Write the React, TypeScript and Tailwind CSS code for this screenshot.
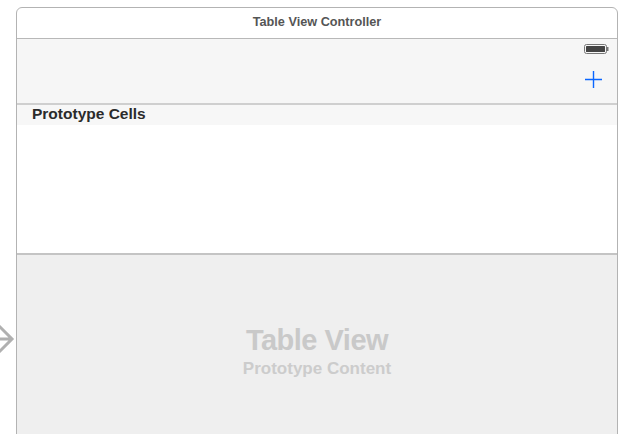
export default function App() {
  return (
    <main className="h-[434px] w-[633px] overflow-hidden bg-white pl-4 pr-[15px] pt-[7px] font-['Liberation_Sans',sans-serif]">
      <div className="relative flex h-[440px] flex-col rounded-t-[6px] border border-[#b3b3b3] bg-white">
        {/* Title bar */}
        <div className="flex h-[31px] shrink-0 items-center justify-center border-b border-[#b8b8b8] text-[12.7px] font-bold text-[#555555]">
          Table View Controller
        </div>

        {/* Navigation bar */}
        <div className="flex h-[66px] shrink-0 flex-col items-end border-b-2 border-[#cfcfcf] bg-[#f6f6f6] pr-[8px] pt-[5px]">
          <svg width="25" height="10" viewBox="0 0 25 10">
            <rect x="0.5" y="0.5" width="22" height="9" rx="2" fill="none" stroke="#777777" />
            <rect x="2" y="2" width="19" height="6" rx="0.5" fill="#444444" />
            <rect x="23" y="3" width="1.5" height="4" fill="#777777" />
          </svg>
          <svg className="mr-[7px] mt-[17px]" width="17" height="17" viewBox="0 0 17 17">
            <path d="M8.5 0V17M0 8.5H17" stroke="#0a66ff" strokeWidth="1.4" fill="none" />
          </svg>
        </div>

        {/* Prototype cells */}
        <div className="flex h-[20px] shrink-0 items-center bg-[#f7f7f7] pb-[2px] pl-[15px] text-[15.5px] font-bold leading-none text-[#2b2b2b]">
          Prototype Cells
        </div>
        <div className="h-[130px] shrink-0 border-b-2 border-[#c4c4c4] bg-white" />

        {/* Table view */}
        <div className="flex flex-1 flex-col items-center bg-[#efefef] pt-[67px]">
          <div className="text-[29px] font-bold leading-[36px] tracking-[-0.5px] text-[#c9c9c9]">Table View</div>
          <div className="mt-[1px] text-[17px] font-bold leading-[20px] text-[#cccccc]">Prototype Content</div>
        </div>

        {/* Entry point arrow */}
        <svg className="absolute left-[-17px] top-[315px]" width="16" height="32" viewBox="0 0 16 32">
          <path d="M0 16H11M-1 3L12 16L-1 29" stroke="#b0b0b0" strokeWidth="3" fill="none" />
        </svg>
      </div>
    </main>
  );
}
